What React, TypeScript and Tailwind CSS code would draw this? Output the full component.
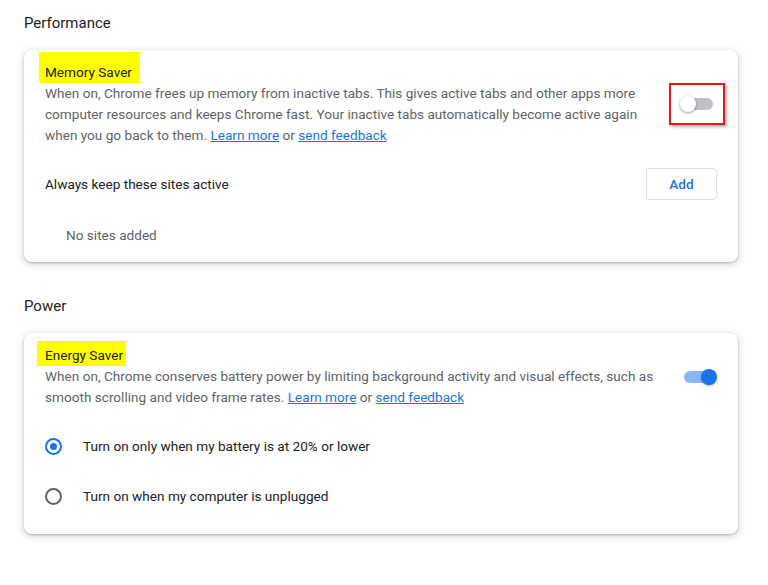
import React from 'react';

const font = { fontFamily: 'Roboto, "Liberation Sans", sans-serif' };

function Highlight({ children, className }: { children: React.ReactNode; className: string }) {
  return (
    <div className="relative w-fit h-[21px] leading-[21px] text-[13.6px] text-[#202124]">
      <span className={`absolute bg-[#ffff00] ${className}`} />
      <span className="relative">{children}</span>
    </div>
  );
}

function Toggle({ on }: { on: boolean }) {
  return (
    <div className="relative w-[34px] h-[16px]">
      <div
        className={
          on
            ? 'absolute left-[1px] right-[1px] top-[2px] h-[12px] rounded-full bg-[#8ab4f8]'
            : 'absolute left-[1px] right-[1px] top-[2px] h-[12px] rounded-full bg-[#bdc1c6]'
        }
      />
      <div
        className={
          on
            ? 'absolute right-0 top-0 w-[16px] h-[16px] rounded-full bg-[#1a73e8] shadow-[0_1px_2px_rgba(0,0,0,0.3)]'
            : 'absolute left-0 top-0 w-[16px] h-[16px] rounded-full bg-white shadow-[0_1px_3px_rgba(0,0,0,0.4)]'
        }
      />
    </div>
  );
}

function Links() {
  return (
    <>
      <span className="text-[#1a73e8] underline">Learn more</span> or{' '}
      <span className="text-[#1a73e8] underline">send feedback</span>
    </>
  );
}

function Radio({ checked, label }: { checked: boolean; label: string }) {
  return (
    <div className="flex items-center h-[50px]">
      <div
        className={
          checked
            ? 'w-[17px] h-[17px] rounded-full border-2 border-[#1a73e8] flex items-center justify-center'
            : 'w-[17px] h-[17px] rounded-full border-2 border-[#5f6368]'
        }
      >
        {checked && <div className="w-[7px] h-[7px] rounded-full bg-[#1a73e8]" />}
      </div>
      <span className="ml-[21px] text-[13.6px] text-[#202124]">{label}</span>
    </div>
  );
}

const card = 'w-[714px] bg-white rounded-[8px] shadow-[0_1px_2px_rgba(60,64,67,0.3),0_2px_6px_2px_rgba(60,64,67,0.15)]';

export default function App() {
  return (
    <div className="w-[768px] h-[585px] bg-white pl-[24px]" style={font}>
      <h2 className="pt-[13px] h-[50px] text-[15px] leading-[20px] text-[#202124]">Performance</h2>

      <div className={`${card} pl-[21px] pr-[21px] pt-[12px] pb-[17px]`}>
        <div className="flex items-center">
          <div className="flex-1">
            <Highlight className="-left-[6px] -right-[8px] -top-[10px] bottom-0">Memory Saver</Highlight>
            <p className="text-[13.6px] leading-[21px] text-[#5f6368] pr-[14px]">
              When on, Chrome frees up memory from inactive tabs. This gives active tabs and other apps more
              computer resources and keeps Chrome fast. Your inactive tabs automatically become active again
              when you go back to them. <Links />
            </p>
          </div>
          <div className="mr-[-8px] px-[9px] py-[11px] border-2 border-[#e01b1b] shadow-[2px_2px_3px_rgba(0,0,0,0.3)]">
            <Toggle on={false} />
          </div>
        </div>

        <div className="flex items-center justify-between mt-[22px]">
          <span className="text-[13.6px] text-[#202124]">Always keep these sites active</span>
          <button className="w-[71px] h-[32px] rounded-[4px] border border-[#dadce0] text-[13.6px] font-medium text-[#1a73e8]">
            Add
          </button>
        </div>

        <div className="mt-[25px] pl-[21px] h-[20px] leading-[20px] text-[13.6px] text-[#5f6368]">No sites added</div>
      </div>

      <h2 className="pt-[34px] h-[71px] text-[15px] leading-[20px] text-[#202124]">Power</h2>

      <div className={`${card} pl-[21px] pr-[21px] pt-[12px] pb-[13px]`}>
        <div className="flex items-center">
          <div className="flex-1">
            <Highlight className="-left-[8px] -right-[3px] -top-[4px] bottom-0">Energy Saver</Highlight>
            <p className="text-[13.6px] leading-[21px] text-[#5f6368] pr-[20px]">
              When on, Chrome conserves battery power by limiting background activity and visual effects, such as
              smooth scrolling and video frame rates. <Links />
            </p>
          </div>
          <Toggle on={true} />
        </div>

        <div className="mt-[13px]">
          <Radio checked={true} label="Turn on only when my battery is at 20% or lower" />
          <Radio checked={false} label="Turn on when my computer is unplugged" />
        </div>
      </div>
    </div>
  );
}
